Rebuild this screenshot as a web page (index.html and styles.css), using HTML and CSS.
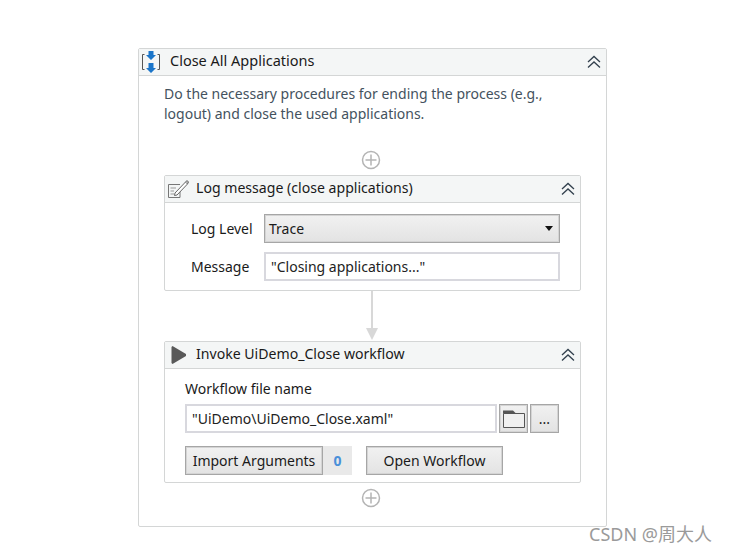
FILE: index.html
```html
<!DOCTYPE html>
<html lang="en">

<head>
    <meta charset="UTF-8">
    <title>Close All Applications</title>
    <link rel="stylesheet" href="styles.css">
</head>

<body>
    <div class="sequence">
        <div class="head outerHead">
            <svg class="seqIcon" width="22" height="22" viewBox="0 0 22 22">
                <path d="M4.500 3.500H2.500V18.500H4.500M17.500 3.500H19.500V18.500H17.500" fill="none" stroke="#555" stroke-width="1"/>
                <path d="M8.500 0H13.500V4H16L11 9L6 4H8.500Z" fill="#1b75c9"/>
                <path d="M8.500 12H13.500V17H16L11 22L6 17H8.500Z" fill="#1b75c9"/>
            </svg>
            <span class="title outerTitle">Close All Applications</span>
            <svg class="chev" width="14" height="14" viewBox="0 0 14 14"><path d="M1 7L7 1.500L13 7M1 12.500L7 7L13 12.500" fill="none" stroke="#33414e" stroke-width="1.300"/></svg>
        </div>
        <p class="note">Do the necessary procedures for ending the process (e.g.,<br>logout) and close the used applications.</p>

        <div class="plusRow">
            <svg width="20" height="20" viewBox="0 0 20 20"><circle cx="10" cy="10" r="8.500" fill="none" stroke="#b4b4b4" stroke-width="1.500"/><path d="M10 4.500V15.500M4.500 10H15.500" stroke="#b4b4b4" stroke-width="1.500"/></svg>
        </div>

        <div class="card logCard">
            <div class="head">
                <svg class="logIcon" width="22" height="20" viewBox="0 0 22 20">
                    <path d="M13 5.500H1.500V18.500H13V11" fill="none" stroke="#777" stroke-width="1"/>
                    <path d="M3.500 9H9M3.500 12H7M3.500 15H7" stroke="#999" stroke-width="1"/>
                    <path d="M8 14L7.500 16.500L10 16L20.500 5L18.500 3Z" fill="#fff" stroke="#666" stroke-width="1"/>
                    <path d="M18.500 3L20 1.500L21.500 3L20.500 5" fill="#bbb" stroke="#666" stroke-width="1"/>
                </svg>
                <span class="title">Log message (close applications)</span>
                <svg class="chev" width="14" height="14" viewBox="0 0 14 14"><path d="M1 7L7 1.500L13 7M1 12.500L7 7L13 12.500" fill="none" stroke="#33414e" stroke-width="1.300"/></svg>
            </div>
            <div class="logBody">
                <div class="row">
                    <label class="rowLabel">Log Level</label>
                    <div class="select btn">
                        <span>Trace</span>
                        <i class="caret"></i>
                    </div>
                </div>
                <div class="row">
                    <label class="rowLabel">Message</label>
                    <div class="input">"Closing applications..."</div>
                </div>
            </div>
        </div>

        <div class="connector">
            <div class="line"></div>
            <div class="arrow"></div>
        </div>

        <div class="card">
            <div class="head">
                <svg class="playIcon" width="16" height="20" viewBox="0 0 16 20"><path d="M1.500 1L15 9L15 11L1.500 19L0.500 18V2Z" fill="#595959"/></svg>
                <span class="title">Invoke UiDemo_Close workflow</span>
                <svg class="chev" width="14" height="14" viewBox="0 0 14 14"><path d="M1 7L7 1.500L13 7M1 12.500L7 7L13 12.500" fill="none" stroke="#33414e" stroke-width="1.300"/></svg>
            </div>
            <div class="invokeBody">
                <div class="fileLabel">Workflow file name</div>
                <div class="fileRow">
                    <div class="input fileInput">"UiDemo\UiDemo_Close.xaml"</div>
                    <div class="btn square">
                        <svg width="22" height="18" viewBox="0 0 22 18"><path d="M0.500 3.500H21.500V17.500H0.500Z" fill="#f0f0f0" stroke="#555" stroke-width="1"/><path d="M0 0.500H10L13 3.500H0Z" fill="#555"/></svg>
                    </div>
                    <div class="btn square">...</div>
                </div>
                <div class="btnRow">
                    <div class="btn importBtn">Import Arguments</div>
                    <div class="count">0</div>
                    <div class="btn openBtn">Open Workflow</div>
                </div>
            </div>
        </div>

        <div class="plusRow lastPlus">
            <svg width="20" height="20" viewBox="0 0 20 20"><circle cx="10" cy="10" r="8.500" fill="none" stroke="#b4b4b4" stroke-width="1.500"/><path d="M10 4.500V15.500M4.500 10H15.500" stroke="#b4b4b4" stroke-width="1.500"/></svg>
        </div>
    </div>
    <div class="mark">CSDN @周大人</div>
</body>

</html>
```

FILE: styles.css
```css
body {
    margin: 0;
    background-color: #fff;
    color: #1a1a1a;
    font-family: "Noto Sans", "Noto Sans CJK SC", sans-serif;
    font-size: 14px;
}

.sequence {
    box-sizing: border-box;
    width: 469px;
    height: 479px;
    margin: 48px 0 0 138px;
    border: 1px solid #d4d6d6;
    border-radius: 2px;
}

.head {
    box-sizing: border-box;
    display: flex;
    align-items: center;
    height: 27px;
    padding-right: 5px;
    background-color: #f4f6f6;
    border-bottom: 1px solid #d4d6d6;
}
.title {
    flex: 1;
    margin-bottom: 3px;
    font-size: 14.1px;
    white-space: nowrap;
}
.outerTitle {
    margin-bottom: 4px;
    font-size: 14.5px;
}
.seqIcon {
    margin: 0 8px 0 1px;
}
.logIcon {
    margin: 0 7px 0 2px;
}
.playIcon {
    margin: 0 9px 0 6px;
}

.note {
    margin: 8px 0 0 25px;
    line-height: 20px;
    color: #44525e;
}

.plusRow {
    display: flex;
    justify-content: center;
    height: 20px;
    margin-top: 26px;
    margin-left: -3px;
}
.lastPlus {
    margin-top: 5px;
}

.card {
    box-sizing: border-box;
    width: 417px;
    margin: 0 0 0 25px;
    border: 1px solid #d4d6d6;
    border-radius: 2px;
}
.logCard {
    margin-top: 5px;
}

.logBody {
    height: 87px;
    padding: 11px 20px 0 26px;
    box-sizing: border-box;
}
.row {
    display: flex;
    align-items: center;
    height: 29px;
    margin-bottom: 9px;
}
.rowLabel {
    width: 73px;
}

.btn {
    box-sizing: border-box;
    display: flex;
    align-items: center;
    justify-content: center;
    height: 29px;
    border: 1px solid #a6a6a6;
    box-shadow: inset 0 0 0 1px #d4d4d4;
    background: linear-gradient(#f1f1f1, #e3e3e3);
    white-space: nowrap;
}
.select {
    flex: 1;
    justify-content: space-between;
    padding: 0 6px 0 4px;
}
.caret {
    border-left: 4px solid transparent;
    border-right: 4px solid transparent;
    border-top: 5px solid #111;
}
.input {
    box-sizing: border-box;
    flex: 1;
    display: flex;
    align-items: center;
    height: 29px;
    padding-left: 5px;
    border: 2px solid #d8d8de;
    white-space: nowrap;
    color: #222;
}

.connector {
    display: flex;
    flex-direction: column;
    align-items: center;
    width: 20px;
    height: 50px;
    margin-left: 223px;
}
.line {
    width: 2px;
    height: 37px;
    background-color: #d8d8d8;
}
.arrow {
    border-left: 6px solid transparent;
    border-right: 6px solid transparent;
    border-top: 12px solid #d8d8d8;
}

.invokeBody {
    box-sizing: border-box;
    height: 113px;
    padding: 10px 21px 0 20px;
}
.fileLabel {
    height: 25px;
    line-height: 20px;
}
.fileRow {
    display: flex;
    gap: 2px;
}
.fileInput {
    flex: none;
    width: 312px;
}
.square {
    width: 29px;
    padding: 0;
}
.btnRow {
    display: flex;
    margin-top: 13px;
}
.importBtn {
    width: 138px;
}
.count {
    width: 29px;
    height: 29px;
    line-height: 29px;
    text-align: center;
    font-weight: bold;
    color: #4a90d9;
    background-color: #e9e9e9;
}
.openBtn {
    width: 137px;
    margin-left: 14px;
}

.mark {
    position: absolute;
    left: 589px;
    top: 522px;
    font-size: 18px;
    line-height: 24px;
    color: #9a9a9a;
    white-space: nowrap;
}
```
